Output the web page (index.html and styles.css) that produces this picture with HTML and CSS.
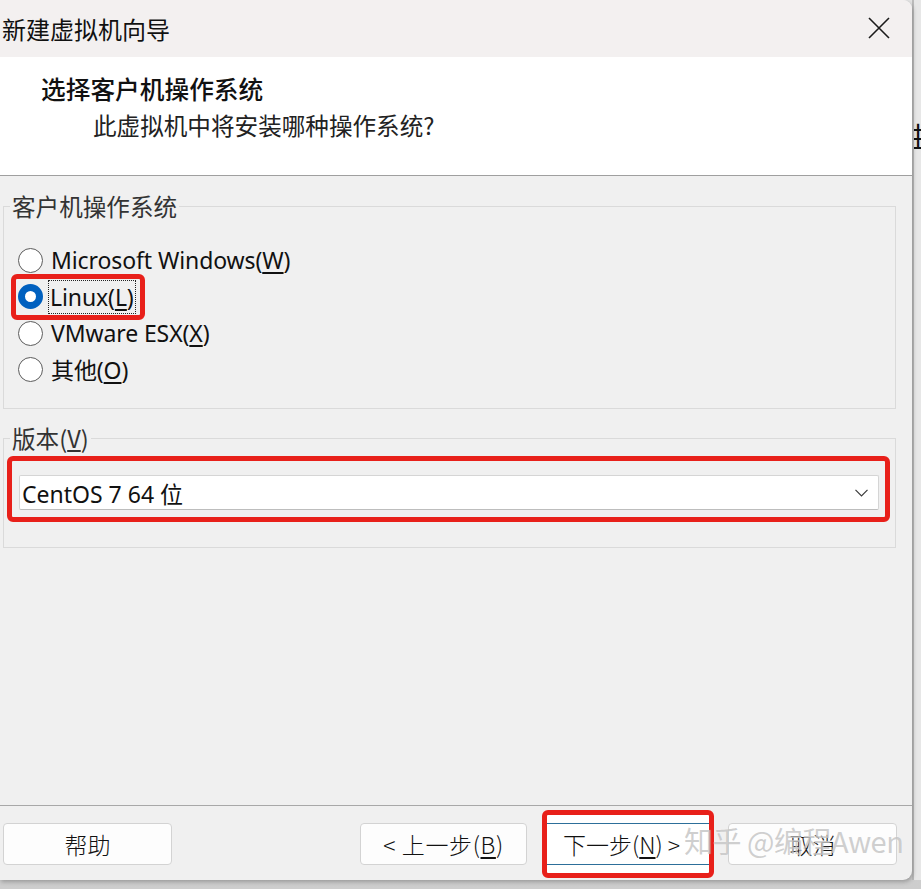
FILE: index.html
```html
<!DOCTYPE html>
<html lang="zh-CN">
<head>
<meta charset="utf-8">
<title>新建虚拟机向导</title>
<link rel="stylesheet" href="styles.css">
</head>
<body>
<div class="screen">
  <div class="window">
    <div class="titlebar">
      <span class="title">新建虚拟机向导</span>
      <svg class="close" width="22" height="22" viewBox="0 0 22 22"><path d="M1 1 L21 21 M21 1 L1 21" stroke="#1b1b1b" stroke-width="1.6" fill="none"/></svg>
    </div>
    <div class="header">
      <div class="h-title">选择客户机操作系统</div>
      <div class="h-sub">此虚拟机中将安装哪种操作系统?</div>
    </div>
    <div class="content">
      <fieldset class="group group-os">
        <legend>客户机操作系统</legend>
        <div class="radio-row"><span class="radio"></span><span class="label">Microsoft Windows(<u>W</u>)</span></div>
        <div class="radio-row marked"><span class="radio checked"></span><span class="label focus">Linux(<u>L</u>)</span><span class="mark-box"></span></div>
        <div class="radio-row"><span class="radio"></span><span class="label">VMware ESX(<u>X</u>)</span></div>
        <div class="radio-row"><span class="radio"></span><span class="label">其他(<u>O</u>)</span></div>
      </fieldset>
      <fieldset class="group group-ver">
        <legend>版本(<u>V</u>)</legend>
        <div class="select-mark">
          <div class="select">
            <span class="select-text">CentOS 7 64 位</span>
            <svg class="chev" width="13" height="8" viewBox="0 0 13 8"><path d="M0.5 0.8 L6.5 6.8 L12.5 0.8" stroke="#3a3a3a" stroke-width="1.2" fill="none"/></svg>
          </div>
        </div>
      </fieldset>
    </div>
    <div class="footer">
      <button class="btn btn-help">帮助</button>
      <span class="spacer"></span>
      <button class="btn btn-back">&lt; 上一步(<u>B</u>)</button>
      <div class="next-mark"><button class="btn btn-next">下一步(<u>N</u>) &gt;</button></div>
      <button class="btn btn-cancel">取消</button>
      <span class="watermark">知乎 @编程Awen</span>
    </div>
  </div>
  <div class="edge"><span class="edge-glyph">生</span></div>
</div>
</body>
</html>
```

FILE: styles.css
```css
* { box-sizing: border-box; }
html, body { margin: 0; padding: 0; }
body {
  width: 921px;
  height: 889px;
  overflow: hidden;
  background: #cfcfcf;
  font-family: "Noto Sans", "Noto Sans CJK SC", sans-serif;
  color: #000;
}
.screen {
  display: flex;
  width: 921px;
  height: 889px;
  background: linear-gradient(#e4e4e4, #cdcdcd);
}
.window {
  position: relative;
  width: 912px;
  height: 880px;
  display: flex;
  flex-direction: column;
  background: #f0f0f0;
  border-radius: 0 9px 9px 0;
  box-shadow: 1px 2px 4px rgba(0,0,0,0.25);
  overflow: hidden;
  flex-shrink: 0;
}
.titlebar {
  height: 57px;
  background: #f3f0f0;
  display: flex;
  align-items: center;
  justify-content: space-between;
  padding: 0 22px 0 2px;
  flex-shrink: 0;
}
.title {
  font-family: "Noto Sans CJK SC", sans-serif;
  font-size: 24px;
  font-weight: 400;
  color: #111;
}
.close { margin-top: -1px; }
.header {
  height: 119px;
  background: #fff;
  border-bottom: 1px solid #9f9f9f;
  flex-shrink: 0;
  padding-top: 12px;
}
.h-title {
  font-family: "Noto Sans CJK SC", sans-serif;
  font-size: 24.7px;
  font-weight: 500;
  line-height: 38px;
  padding-left: 41px;
  color: #111;
}
.h-sub {
  font-family: "Noto Sans CJK SC", sans-serif;
  font-size: 23.6px;
  line-height: 36px;
  padding-left: 93px;
  color: #222;
}
.content {
  flex: 1;
  padding: 15px 16px 0 3px;
  border-bottom: 1px solid #a8a8a8;
}
.group {
  margin: 0;
  border: 1px solid #dadada;
  border-radius: 0;
  min-width: 0;
}
.group legend {
  font-family: "Noto Sans CJK SC", sans-serif;
  font-size: 23.6px;
  line-height: 30px;
  color: #333;
  padding: 0 2px;
  margin-left: 6px;
}
.group-os {
  padding: 21px 0 20px 14px;
}
.group-os legend { margin-left: -8px; }
.radio-row {
  position: relative;
  display: flex;
  align-items: center;
  height: 36.5px;
}
.radio {
  width: 25px;
  height: 25px;
  border-radius: 50%;
  border: 1.5px solid #5c5c5c;
  background: #fff;
  flex-shrink: 0;
  margin-right: 8px;
}
.radio.checked {
  border: 7px solid #0060bf;
  background: #fff;
}
.label {
  font-family: "Noto Sans", "Noto Sans CJK SC", sans-serif;
  font-size: 23px;
  line-height: 32px;
  color: #111;
  white-space: nowrap;
  letter-spacing: -0.1px;
}
.label u { text-underline-offset: 3px; }
.label.focus {
  outline: 1px dotted #222;
  outline-offset: 0;
  margin-left: -2px;
  padding: 0 1px;
}
.mark-box {
  position: absolute;
  left: -7px;
  top: -5px;
  width: 134px;
  height: 46px;
  border: 5px solid #e8201a;
  border-radius: 6px;
  pointer-events: none;
}
.group-ver {
  margin-top: 14px;
  padding: 3px 5px 25px 0;
}
.select-mark {
  margin-left: 3px;
  border: 5px solid #e8201a;
  border-radius: 6px;
  padding: 14px 6px 7px 7px;
  width: 883px;
}
.select {
  height: 35px;
  background: #fff;
  border: 1px solid #d5d5d5;
  border-bottom-color: #bdbdbd;
  border-radius: 2px;
  display: flex;
  align-items: center;
  justify-content: space-between;
  padding: 0 10px 0 2px;
}
.select-text {
  font-family: "Noto Sans", "Noto Sans CJK SC", sans-serif;
  font-size: 23px;
  color: #111;
  letter-spacing: 0;
}
.footer {
  position: relative;
  height: 74px;
  flex-shrink: 0;
  display: flex;
  align-items: center;
  padding: 2px 15px 0 3px;
}
.spacer { flex: 1; }
.btn {
  height: 42px;
  background: #fdfdfd;
  border: 1px solid #d3d3d3;
  border-radius: 4px;
  font-family: "Noto Sans CJK SC", sans-serif;
  font-size: 23px;
  font-weight: 300;
  color: #111;
  padding: 0;
}
.btn u { text-underline-offset: 3px; }
.btn-help { width: 169px; }
.btn-back { width: 167px; margin-right: 15px; letter-spacing: 0.6px; }
.next-mark {
  width: 172px;
  height: 68px;
  border: 5px solid #e8201a;
  border-radius: 6px;
  background: #fff;
  display: flex;
  align-items: center;
  margin-right: 14px;
  margin-top: -1px;
}
.btn-next {
  width: 100%;
  border: none;
  border-top: 1.5px solid #2d6f9a;
  border-bottom: 1.5px solid #2d6f9a;
  border-radius: 0;
  background: #fff;
  text-align: left;
  padding-left: 16px;
}
.btn-cancel { width: 169px; }
.watermark {
  position: absolute;
  left: 684px;
  top: 13px;
  font-family: "Noto Sans CJK SC", sans-serif;
  font-size: 29px;
  color: rgba(160,160,160,0.5);
  text-shadow: 0 0 1px rgba(255,255,255,0.7);
  white-space: nowrap;
  letter-spacing: -0.5px;
  pointer-events: none;
}
.edge {
  flex: 1;
  height: 880px;
  background: #e7e7e7;
  border-left: 2px solid #bcbcbc;
  overflow: hidden;
  padding-top: 120px;
}
.edge-glyph {
  display: block;
  margin-left: -10px;
  font-family: "Noto Sans CJK SC", sans-serif;
  font-size: 28px;
  line-height: 32px;
  color: #111;
}
```
